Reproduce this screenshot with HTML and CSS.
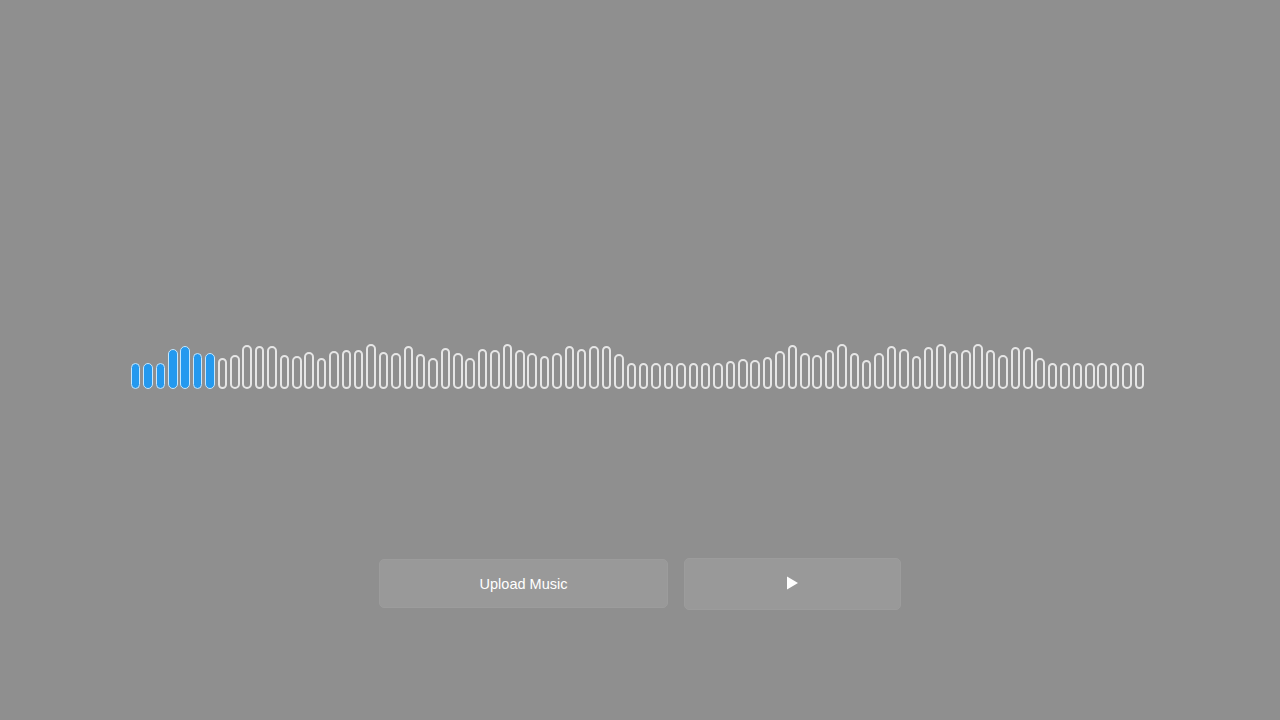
FILE: index.html
```html
<!DOCTYPE html>
<html lang="en">
<head>
  <meta charset="UTF-8" />
  <meta name="viewport" content="width=device-width, initial-scale=1.0"/>
  <title>Music Visualizer</title>
  <link rel="stylesheet" href="styles.css">
</head>
<body>
  <main class="player">
    <div class="wave" id="wave">
      <!-- bars are built from the levels below -->
    </div>

    <div class="controls">
      <button class="btn btn-upload" id="uploadBtn">Upload Music</button>
      <button class="btn btn-play" id="playBtn" aria-label="Play">
        <svg viewBox="0 0 12 14" xmlns="http://www.w3.org/2000/svg"><path d="M0 0L12 7L0 14Z"/></svg>
      </button>
    </div>
  </main>

  <script>
    // bar levels in px, one per frequency band
    var levels = [
      26,26,26,40,43,36,36,31,34,44,43,43,34,33,37,31,38,39,39,45,
      37,36,43,35,31,41,36,31,40,39,45,39,36,33,36,43,40,43,43,35,
      26,26,26,26,26,26,26,26,28,30,29,32,38,44,36,34,39,45,36,29,
      36,43,40,33,42,45,38,39,45,39,34,42,42,31,26,26,26,26,26,26,
      26,26
    ];
    var played = 7;

    var wave = document.getElementById('wave');
    levels.forEach(function(h, i) {
      var bar = document.createElement('span');
      bar.className = 'bar' + (i < played ? ' active' : '');
      bar.style.height = h + 'px';
      wave.appendChild(bar);
    });
  </script>
</body>
</html>
```

FILE: styles.css
```css
html, body {
  margin: 0;
  height: 100%;
}
body {
  font-family: 'Liberation Sans', Arial, sans-serif;
  background: #8f8f8f;
  color: #fff;
  overflow: hidden;
}
.player {
  display: flex;
  flex-direction: column;
  align-items: center;
  padding-top: 344px;
}
.wave {
  display: flex;
  align-items: flex-end;
  gap: 2.9px;
  height: 45px;
  margin-right: 5px;
}
.bar {
  display: block;
  width: 9.5px;
  box-sizing: border-box;
  border: 2px solid #e6e6e6;
  border-radius: 6px;
}
.bar.active {
  background: #2399ef;
  border-width: 1px;
  border-color: #c6e7fd;
}
.controls {
  display: flex;
  align-items: center;
  gap: 16px;
  margin-top: 169px;
}
.btn {
  display: flex;
  align-items: center;
  justify-content: center;
  background: #999999;
  border: 1px solid #9c9c9c;
  border-radius: 5px;
  color: #fff;
  font-family: inherit;
  font-size: 14.5px;
  cursor: pointer;
  padding: 0;
}
.btn-upload {
  width: 289px;
  height: 49px;
  margin-bottom: 1px;
}
.btn-play {
  width: 217px;
  height: 52px;
}
.btn-play svg {
  width: 11px;
  height: 14px;
  fill: #fff;
  margin-bottom: 3px;
}
```
